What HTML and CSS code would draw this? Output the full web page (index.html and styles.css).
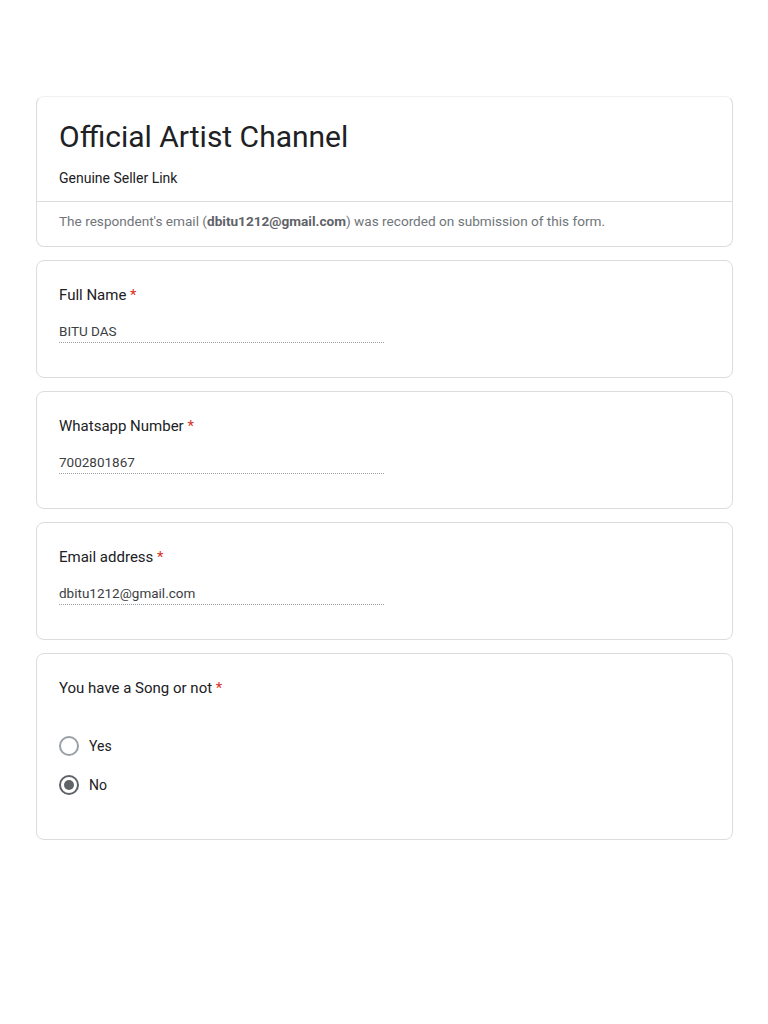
FILE: index.html
```html
<!DOCTYPE html>
<html>
<head>
<meta charset="utf-8">
<link rel="stylesheet" href="styles.css">
</head>
<body>
<div class="form">
  <div class="card header">
    <div class="head-main">
      <h1 class="title">Official Artist Channel</h1>
      <div class="subtitle">Genuine Seller Link</div>
    </div>
    <div class="head-note">The respondent's email (<b>dbitu1212@gmail.com</b>) was recorded on submission of this form.</div>
  </div>

  <div class="card question">
    <div class="label">Full Name <span class="req">*</span></div>
    <div class="answer">BITU DAS</div>
  </div>

  <div class="card question">
    <div class="label">Whatsapp Number <span class="req">*</span></div>
    <div class="answer">7002801867</div>
  </div>

  <div class="card question">
    <div class="label">Email address <span class="req">*</span></div>
    <div class="answer">dbitu1212@gmail.com</div>
  </div>

  <div class="card question radio-q">
    <div class="label">You have a Song or not <span class="req">*</span></div>
    <div class="options">
      <div class="option"><span class="radio"></span><span>Yes</span></div>
      <div class="option"><span class="radio checked"></span><span>No</span></div>
    </div>
  </div>
</div>
</body>
</html>
```

FILE: styles.css
```css
html, body {
  margin: 0;
  padding: 0;
  background: #ffffff;
}
body {
  font-family: Roboto, "Liberation Sans", Arial, sans-serif;
  color: #202124;
}
.form {
  margin: 96px 35px 0 36px;
  display: flex;
  flex-direction: column;
  gap: 13px;
}
.card {
  border: 1px solid #dadce0;
  border-radius: 8px;
  background: #fff;
}
.header {
  border-top-color: #f1f1f1;
}
.head-main {
  padding: 20px 22px 13px;
  border-bottom: 1px solid #dadce0;
}
.title {
  margin: 0;
  font-weight: 400;
  font-size: 30px;
  line-height: 40px;
  color: #202124;
}
.subtitle {
  margin-top: 11px;
  font-size: 14px;
  line-height: 20px;
  color: #202124;
}
.head-note {
  padding: 9px 22px 15px;
  font-size: 13.6px;
  line-height: 20px;
  color: #70757a;
}
.head-note b {
  font-weight: 700;
  color: #5f6368;
}
.question {
  padding: 24px 22px 34px;
}
.label {
  font-size: 15px;
  line-height: 20px;
  color: #202124;
}
.req {
  color: #d93025;
}
.answer {
  margin-top: 17px;
  width: 325px;
  font-size: 13.5px;
  line-height: 18px;
  padding-bottom: 2px;
  border-bottom: 1px dotted #9aa0a6;
  color: #3c4043;
}
.radio-q {
  padding-bottom: 44px;
}
.options {
  margin-top: 38px;
  display: flex;
  flex-direction: column;
  gap: 19px;
}
.option {
  display: flex;
  align-items: center;
  gap: 10px;
  font-size: 14px;
  line-height: 20px;
  color: #202124;
}
.radio {
  box-sizing: border-box;
  width: 20px;
  height: 20px;
  border: 2px solid #9aa0a6;
  border-radius: 50%;
  position: relative;
  flex: none;
}
.radio.checked {
  border-color: #5f6368;
}
.radio.checked::after {
  content: "";
  position: absolute;
  left: 3px;
  top: 3px;
  width: 10px;
  height: 10px;
  border-radius: 50%;
  background: #5f6368;
}
```
